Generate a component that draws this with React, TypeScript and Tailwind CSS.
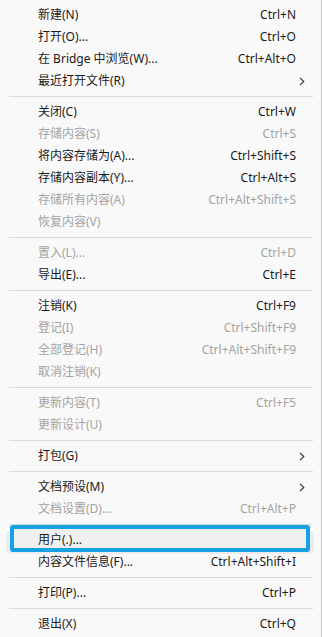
import React from "react";

type Item =
  | { sep: true }
  | { sep?: false; label: string; sc?: string; dis?: boolean; sub?: boolean; hl?: boolean };

const items: Item[] = [
  { label: "新建(N)", sc: "Ctrl+N" },
  { label: "打开(O)...", sc: "Ctrl+O" },
  { label: "在 Bridge 中浏览(W)...", sc: "Ctrl+Alt+O" },
  { label: "最近打开文件(R)", sub: true },
  { sep: true },
  { label: "关闭(C)", sc: "Ctrl+W" },
  { label: "存储内容(S)", sc: "Ctrl+S", dis: true },
  { label: "将内容存储为(A)...", sc: "Ctrl+Shift+S" },
  { label: "存储内容副本(Y)...", sc: "Ctrl+Alt+S" },
  { label: "存储所有内容(A)", sc: "Ctrl+Alt+Shift+S", dis: true },
  { label: "恢复内容(V)", dis: true },
  { sep: true },
  { label: "置入(L)...", sc: "Ctrl+D", dis: true },
  { label: "导出(E)...", sc: "Ctrl+E" },
  { sep: true },
  { label: "注销(K)", sc: "Ctrl+F9" },
  { label: "登记(I)", sc: "Ctrl+Shift+F9", dis: true },
  { label: "全部登记(H)", sc: "Ctrl+Alt+Shift+F9", dis: true },
  { label: "取消注销(K)", dis: true },
  { sep: true },
  { label: "更新内容(T)", sc: "Ctrl+F5", dis: true },
  { label: "更新设计(U)", dis: true },
  { sep: true },
  { label: "打包(G)", sub: true },
  { sep: true },
  { label: "文档预设(M)", sub: true },
  { label: "文档设置(D)...", sc: "Ctrl+Alt+P", dis: true },
  { sep: true },
  { label: "用户(.)...", hl: true },
  { label: "内容文件信息(F)...", sc: "Ctrl+Alt+Shift+I" },
  { sep: true },
  { label: "打印(P)...", sc: "Ctrl+P" },
  { sep: true },
  { label: "退出(X)", sc: "Ctrl+Q" },
];

function Chevron() {
  return (
    <svg width="6" height="9" viewBox="0 0 6 9" className="mr-[-9px]">
      <path d="M1 0.8 L4.8 4.5 L1 8.2" fill="none" stroke="#333" strokeWidth="1.1" />
    </svg>
  );
}

export default function App() {
  return (
    <div
      className="w-[322px] h-[637px] bg-[#f9f9f9] border-r border-[#c8c8c8] pt-[4px] text-[12px] text-[#1a1a1a] overflow-hidden"
      style={{ fontFamily: '"Segoe UI", "Noto Sans", "Noto Sans CJK SC", sans-serif' }}
    >
      {items.map((it, i) =>
        it.sep ? (
          <div key={i} className="py-[4px] pl-[9px] pr-[8px]">
            <div className="h-px bg-[#dadada]" />
          </div>
        ) : (
          <div key={i} className="relative h-[22px] px-[6px]">
            {it.hl && (
              <>
                <div className="absolute left-[6px] right-[7px] top-[3px] bottom-[-3px] rounded-[4px] bg-[#ececec]" />
                <div className="absolute left-[10px] right-[11px] top-[-4px] bottom-[-1px] rounded-[3px] border-[4px] border-[#16a2e2] bg-[#f0f0f0]" />
              </>
            )}
            <div
              className={`relative h-full flex items-center pl-[32px] pr-[19px] ${
                it.dis ? "text-[#a3a3a3]" : "text-[#1a1a1a]"
              }`}
            >
              <span className="flex-1 whitespace-nowrap">{it.label}</span>
              {it.sc && <span className="whitespace-nowrap">{it.sc}</span>}
              {it.sub && <Chevron />}
            </div>
          </div>
        )
      )}
    </div>
  );
}
